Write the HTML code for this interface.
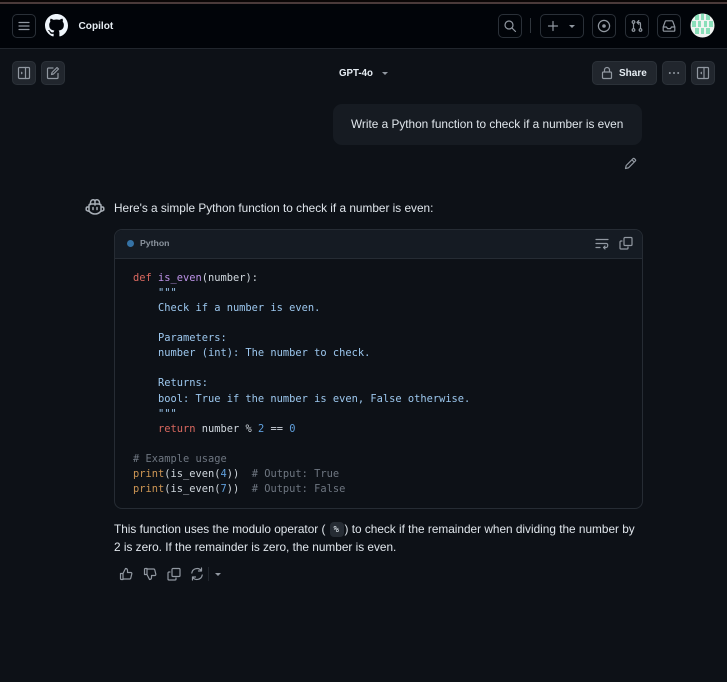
<!DOCTYPE html>
<html><head><meta charset="utf-8"><style>
*{box-sizing:border-box}
html,body{margin:0;padding:0;width:727px;height:682px;overflow:hidden;background:#0d1117}
body{position:relative;font-family:"Liberation Sans",sans-serif;color:#e6edf3}
#w{position:absolute;left:0;top:0;width:727px;height:682px;filter:blur(.35px)}
.a{position:absolute;white-space:pre}
.btn{position:absolute;width:24px;height:24px;border-radius:5px;border:1px solid #2a3038}
.g{background:#21262d;border-color:#2b3138}
svg{position:absolute;fill:none;stroke:#9198a1;stroke-width:1.2;stroke-linecap:round;stroke-linejoin:round}
pre{position:absolute;margin:0;left:133px;top:271px;font:10.38px/15.07px "DejaVu Sans Mono","Liberation Mono",monospace;color:#d0d7de}
.r{color:#d9685f}.p{color:#bd93e8}.b{color:#9cc7ee}.c{color:#5f9fdc}.o{color:#cc9554}.m{color:#6e7681}
.t{font-size:11.82px;line-height:15px;color:#e0e6ec}
</style></head><body><div id="w">
<div class="a" style="left:0;top:0;width:727px;height:49px;background:#010409;border-bottom:1px solid #21262d"></div>
<div class="a" style="left:0;top:0;width:727px;height:4px;background:#0a0606"></div>
<div class="a" style="left:0;top:1.500px;width:727px;height:2px;background:#4a3a3a"></div>

<div class="btn" style="left:12px;top:14px"></div>
<svg style="left:18px;top:20px" width="12" height="12"><path d="M1 2.500h10M1 6h10M1 9.500h10"/></svg>
<svg style="left:45px;top:14px;fill:#f0f6fc;stroke:none" width="23" height="23" viewBox="0 0 16 16"><path d="M8 0C3.58 0 0 3.58 0 8c0 3.540 2.290 6.530 5.470 7.590.4.070.55-.17.55-.38 0-.19-.01-.82-.01-1.490-2.010.37-2.530-.49-2.690-.94-.09-.23-.48-.94-.82-1.130-.28-.15-.68-.52-.01-.53.63-.01 1.080.58 1.230.82.72 1.210 1.870.87 2.330.66.07-.52.28-.87.51-1.070-1.780-.2-3.640-.89-3.640-3.950 0-.87.31-1.590.82-2.150-.08-.2-.36-1.020.08-2.120 0 0 .67-.21 2.200.82.64-.18 1.320-.27 2-.27s1.360.09 2 .27c1.530-1.040 2.200-.82 2.200-.82.44 1.100.16 1.920.08 2.120.51.56.82 1.270.82 2.150 0 3.070-1.870 3.750-3.650 3.950.29.25.54.73.54 1.480 0 1.070-.01 1.930-.01 2.200 0 .21.15.46.55.38A8.010 8.010 0 0 0 16 8c0-4.420-3.580-8-8-8z"/></svg>
<div class="a" style="left:78.500px;top:20px;font-size:10.100px;font-weight:700;line-height:13px;color:#e6edf3">Copilot</div>

<div class="btn" style="left:498px;top:14px"></div>
<svg style="left:503px;top:19px" width="14" height="14"><circle cx="6" cy="6" r="4"/><path d="M9 9l3.500 3.500"/></svg>
<div class="a" style="left:530px;top:18px;width:1px;height:15px;background:#30363d"></div>
<div class="a" style="left:540px;top:14px;width:44px;height:24px;border:1px solid #2a3038;border-radius:5px"></div>
<svg style="left:547px;top:20px" width="12" height="12"><path d="M6 1.500v9M1.500 6h9"/></svg>
<div class="a" style="left:569px;top:25px;width:0;height:0;border:3px solid transparent;border-top:3px solid #9198a1"></div>
<div class="btn" style="left:592px;top:14px"></div>
<svg style="left:597px;top:19px" width="14" height="14"><circle cx="7" cy="7" r="5.600"/><circle cx="7" cy="7" r="1.200" fill="#9198a1"/></svg>
<div class="btn" style="left:625px;top:14px"></div>
<svg style="left:630px;top:19px" width="14" height="14"><circle cx="3.500" cy="3" r="1.300"/><circle cx="3.500" cy="11" r="1.300"/><circle cx="10.500" cy="11" r="1.300"/><path d="M3.500 4.500v5M10.500 9.500V5c0-1-.6-1.600-1.600-1.600H7.500M8.800 1.600L7 3.400l1.800 1.800"/></svg>
<div class="btn" style="left:657px;top:14px"></div>
<svg style="left:662px;top:19px" width="14" height="14"><path d="M1.200 8l2-5.600c.1-.3.4-.6.8-.6h6c.4 0 .7.3.8.6l2 5.600v3.200c0 .6-.4 1-1 1H2.200c-.6 0-1-.4-1-1zM1.200 8H4.500l1 1.600h3l1-1.600h3.300"/></svg>
<svg style="left:690px;top:13px;stroke:none" width="25" height="25" viewBox="0 0 25 25"><defs><clipPath id="av"><circle cx="12.500" cy="12.500" r="12"/></clipPath></defs><g clip-path="url(#av)"><rect width="25" height="25" fill="#f0f4f2"/><path fill="#8adfba" d="M5 0h4v7H5zM11 0h3v7h-3zM16 0h4v7h-4zM2 8h4v6H2zM8 8h3v6H8zM14 8h3v6h-3zM19 8h4v6h-4zM5 15h4v6H5zM11 15h3v6h-3zM16 15h4v6h-4z"/></g></svg>

<div class="btn g" style="left:12px;top:61px"></div>
<svg style="left:17px;top:66px" width="14" height="14"><rect x="1.500" y="1.500" width="11" height="11" rx="1"/><path d="M8.500 1.500v11"/><path d="M4 5.500l2 1.500-2 1.500z" fill="#9198a1" stroke="none"/></svg>
<div class="btn g" style="left:41px;top:61px"></div>
<svg style="left:46px;top:66px" width="14" height="14"><path d="M12 7.500v4c0 .6-.4 1-1 1H2.500c-.6 0-1-.4-1-1V3c0-.6.4-1 1-1h4.500"/><path d="M5.500 8.500l.5-2 5-5 1.500 1.500-5 5z"/></svg>
<div class="a" style="left:339px;top:66.500px;font-size:9.700px;font-weight:700;line-height:13px;color:#e6edf3">GPT-4o</div>
<div class="a" style="left:382px;top:72px;width:0;height:0;border:3px solid transparent;border-top:3px solid #9198a1"></div>

<div class="a" style="left:592px;top:61px;width:65px;height:24px;background:#21262d;border:1px solid #2b3138;border-radius:5px"></div>
<svg style="left:600px;top:66px" width="14" height="14"><rect x="2.500" y="6" width="9" height="6.500" rx="1"/><path d="M4.500 6V4a2.500 2.500 0 0 1 5 0v2"/></svg>
<div class="a" style="left:619px;top:66.500px;font-size:10px;font-weight:700;line-height:13px;color:#e6edf3">Share</div>
<div class="btn g" style="left:662px;top:61px"></div>
<svg style="left:667px;top:66px;fill:#9198a1;stroke:none" width="14" height="14"><circle cx="2.800" cy="7" r="1"/><circle cx="7" cy="7" r="1"/><circle cx="11.200" cy="7" r="1"/></svg>
<div class="btn g" style="left:691px;top:61px"></div>
<svg style="left:696px;top:66px" width="14" height="14"><rect x="1.500" y="1.500" width="11" height="11" rx="1"/><path d="M8 1.500v11"/><path d="M6 5.500l-2 1.500 2 1.500z" fill="#9198a1" stroke="none"/></svg>

<div class="a" style="left:333px;top:104px;width:309px;height:41px;background:#161b22;border-radius:9px"></div>
<div class="a t" style="left:351px;top:117px">Write a Python function to check if a number is even</div>
<svg style="left:624px;top:157px" width="13" height="13"><path d="M1.500 11.500l.7-3L9 1.700c.4-.4 1-.4 1.400 0l.9.9c.4.400.4 1 0 1.400L4.500 10.800zM8 2.800l2.200 2.200"/></svg>

<svg style="left:85px;top:198px;stroke-width:1.500;stroke:#a8afb7" width="20" height="18"><path d="M5.500 6.500V4.500C5.500 2.800 7 1.500 8.500 1.800c.8.100 1.200.5 1.500 1 .3-.5.700-.9 1.500-1 1.500-.3 3 1 3 2.700v2"/><path d="M10 3v4M4 7.500C4 6.500 5 6 6 6h8c1 0 2 .5 2 1.500v5.500c-1.500 2-4 3-6 3s-4.500-1-6-3z"/><path d="M3.500 9H2.500C1.700 9 1.200 9.600 1.200 10.500v1.500c.7.700 1.500 1 2.300 1.200M16.500 9h1c.8 0 1.300.6 1.300 1.500v1.500c-.7.700-1.500 1-2.300 1.200M8 9.500v2M12 9.500v2"/></svg>
<div class="a t" style="left:114px;top:200.500px">Here's a simple Python function to check if a number is even:</div>

<div class="a" style="left:114px;top:229px;width:529px;height:280px;border:1px solid #262c34;border-radius:8px;background:#0d1117"></div>
<div class="a" style="left:115px;top:230px;width:527px;height:29px;background:#151b23;border-bottom:1px solid #262c34;border-radius:7px 7px 0 0"></div>
<div class="a" style="left:127px;top:240px;width:7px;height:7px;border-radius:50%;background:#3572a5"></div>
<div class="a" style="left:140px;top:238px;font-size:8.700px;line-height:11px;color:#8b949e;font-weight:700">Python</div>
<svg style="left:595px;top:237px" width="14" height="14"><path d="M1 2.500h12M1 6.500h10.500c1.700 0 1.700 4-.5 4H8.500M10 9l-1.500 1.500L10 12M1 10.500h4"/></svg>
<svg style="left:619px;top:236px" width="14" height="14"><rect x="5" y="1.500" width="8" height="8" rx="1"/><path d="M3 5H2c-.5 0-1 .5-1 1v6c0 .5.5 1 1 1h6c.5 0 1-.5 1-1v-1"/></svg>

<pre><span class="r">def</span> <span class="p">is_even</span>(number):
    <span class="b">"""
    Check if a number is even.

    Parameters:
    number (int): The number to check.

    Returns:
    bool: True if the number is even, False otherwise.
    """</span>
    <span class="r">return</span> number % <span class="c">2</span> == <span class="c">0</span>

<span class="m"># Example usage</span>
<span class="o">print</span>(is_even(<span class="c">4</span>))  <span class="m"># Output: True</span>
<span class="o">print</span>(is_even(<span class="c">7</span>))  <span class="m"># Output: False</span></pre>

<div class="a t" style="left:114px;top:521.500px">This function uses the modulo operator (</div>
<div class="a" style="left:329.500px;top:522px;width:14px;height:15px;background:#262c34;border-radius:4px"></div>
<div class="a" style="left:333.500px;top:523px;font:9px/14px 'DejaVu Sans Mono',monospace;color:#e6edf3">%</div>
<div class="a t" style="left:344.500px;top:521.500px">) to check if the remainder when dividing the number by</div>
<div class="a t" style="left:114px;top:539.500px">2 is zero. If the remainder is zero, the number is even.</div>

<svg style="left:119px;top:567px" width="14" height="14"><path d="M1.500 6.500h2.500v6H2.500c-.6 0-1-.4-1-1zM4 6.500l2.500-5c1.200 0 2 .8 2 2v2h3.300c.7 0 1.200.6 1 1.300l-1 4.200c-.1.500-.6 1-1.200 1H4"/></svg>
<svg style="left:143px;top:567px" width="14" height="14"><path d="M1.500 7.500h2.500v-6H2.500c-.6 0-1 .4-1 1zM4 7.500l2.500 5c1.200 0 2-.8 2-2v-2h3.300c.7 0 1.200-.6 1-1.300l-1-4.200c-.1-.5-.6-1-1.200-1H4"/></svg>
<svg style="left:167px;top:567px" width="14" height="14"><rect x="5" y="1.500" width="8" height="8" rx="1"/><path d="M3 5H2c-.5 0-1 .5-1 1v6c0 .5.5 1 1 1h6c.5 0 1-.5 1-1v-1"/></svg>
<svg style="left:190px;top:567px" width="14" height="14"><path d="M1.800 6a5.300 5.300 0 0 1 9.500-2.300M12.200 8a5.300 5.300 0 0 1-9.500 2.300M11.500 1v3h-3M2.500 13v-3h3"/></svg>
<div class="a" style="left:208px;top:567px;width:1px;height:14px;background:#21262d"></div>
<div class="a" style="left:215px;top:573px;width:0;height:0;border:3px solid transparent;border-top:3px solid #9198a1"></div>
</div></body></html>
